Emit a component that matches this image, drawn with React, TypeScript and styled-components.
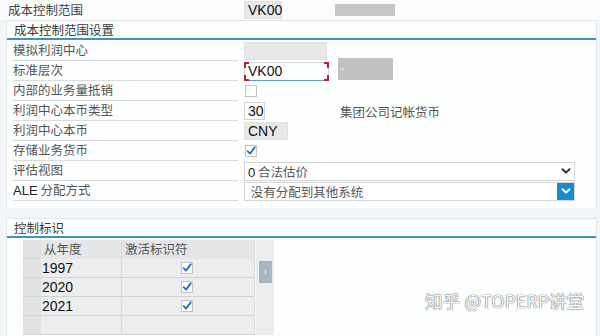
import React from "react";
import styled, { createGlobalStyle, css } from "styled-components";

const Global = createGlobalStyle`
  html, body { margin: 0; padding: 0; }
  body {
    background: #f3f6f8;
    font-family: "Noto Sans CJK SC", "Liberation Sans", sans-serif;
  }
`;

const Page = styled.div`
  position: relative;
  width: 600px;
  height: 336px;
  overflow: hidden;
  background: #f3f6f8;
`;

const TopRow = styled.div`
  display: flex;
  align-items: center;
  height: 20px;
  padding-left: 8px;
  background: #fbfcfd;
`;

const TopLabel = styled.div`
  width: 236px;
  font-size: 12.5px;
  color: #444;
  line-height: 20px;
`;

const Redacted = styled.div`
  width: 60px;
  height: 12px;
  margin-left: 53px;
  background: #c6c6c6;
`;

const Group = styled.div<{ $h: number; $mt: number }>`
  margin: ${(p) => p.$mt}px 3px 0 6px;
  height: ${(p) => p.$h}px;
  background: #fdfefe;
  border: 1px solid #e3e7ea;
  border-bottom: none;
  box-sizing: border-box;
`;

const GroupTitle = styled.div`
  height: 17px;
  line-height: 17px;
  padding-left: 7px;
  font-size: 12.5px;
  color: #3a3a3a;
  border-bottom: 2px solid #3c93c2;
`;

const Rows = styled.div`
  padding-top: 1px;
`;

const Row = styled.div`
  display: grid;
  grid-template-columns: 231px 1fr;
  column-gap: 6px;
  height: 20px;
  align-items: center;
`;

const Label = styled.div`
  margin-left: 6px;
  height: 19px;
  line-height: 18px;
  font-size: 12.5px;
  color: #555;
  border-bottom: 1px solid #d9dcde;
  white-space: nowrap;
`;

const Latin = styled.span`
  font-family: "Liberation Sans", sans-serif;
  font-size: 13px;
  color: #222;
`;

const Cell = styled.div`
  display: flex;
  align-items: center;
  height: 20px;
`;

const red = "#b0223a";

const Field = styled.div<{ $w: number; $grey?: boolean; $focus?: boolean }>`
  position: relative;
  box-sizing: border-box;
  width: ${(p) => p.$w}px;
  height: 18px;
  padding-left: 3px;
  line-height: 17px;
  font-family: "Liberation Sans", sans-serif;
  font-size: 14px;
  color: #111;
  background: ${(p) => (p.$grey ? "#e8e8e8" : "#fff")};
  border: 1px solid ${(p) => (p.$grey ? "#e0e0e0" : "#d2d2d2")};
  ${(p) =>
    p.$focus &&
    css`
      height: 19px;
      border-color: #cfd6dc;
      border-bottom: 1px solid #5aa0c8;
      &::before {
        content: "";
        position: absolute;
        inset: -1px;
        background:
          linear-gradient(${red}, ${red}) left top / 5px 2px no-repeat,
          linear-gradient(${red}, ${red}) left top / 2px 6px no-repeat,
          linear-gradient(${red}, ${red}) left bottom / 5px 2px no-repeat,
          linear-gradient(${red}, ${red}) left bottom / 2px 6px no-repeat,
          linear-gradient(${red}, ${red}) right top / 5px 2px no-repeat,
          linear-gradient(${red}, ${red}) right top / 2px 6px no-repeat,
          linear-gradient(${red}, ${red}) right bottom / 5px 2px no-repeat,
          linear-gradient(${red}, ${red}) right bottom / 2px 6px no-repeat;
      }
    `}
`;

const HelpBox = styled.div`
  width: 55px;
  height: 22px;
  margin-left: 9px;
  margin-top: -4px;
  background: #c2c2c2;
  color: #eee;
  font-size: 10px;
  line-height: 20px;
  padding-left: 3px;
  box-sizing: border-box;
`;

const Note = styled.div`
  margin-left: 75px;
  font-size: 12.5px;
  color: #555;
`;

const Box = styled.div`
  width: 12px;
  height: 12px;
  box-sizing: border-box;
  border: 1px solid #c4c4c4;
  background: #fff;
  display: flex;
  align-items: center;
  justify-content: center;
  margin-left: 1px;
`;

const Check = ({ on }: { on: boolean }) => (
  <Box>
    {on && (
      <svg width="12" height="12" viewBox="0 0 12 12">
        <path d="M2 6.2 L4.8 9.2 L10.5 1.6" fill="none" stroke="#1d6fd0" strokeWidth="2.2" strokeLinecap="round" strokeLinejoin="round" />
      </svg>
    )}
  </Box>
);

const Select = styled.div`
  display: flex;
  align-items: center;
  box-sizing: border-box;
  width: 331px;
  height: 19px;
  background: #fff;
  border: 1px solid #d4d4d4;
  padding-left: 3px;
  font-size: 12.5px;
  color: #555;
`;

const SelectText = styled.div`
  flex: 1;
  white-space: nowrap;
`;

const SelectBtn = styled.div<{ $blue?: boolean }>`
  width: 17px;
  height: 17px;
  display: flex;
  align-items: center;
  justify-content: center;
  background: ${(p) => (p.$blue ? "#1a8ad6" : "transparent")};
`;

const Chevron = ({ color }: { color: string }) => (
  <svg width="10" height="8" viewBox="0 0 10 8">
    <path d="M1.5 2.2 L5 5.6 L8.5 2.2" fill="none" stroke={color} strokeWidth="2" strokeLinecap="round" strokeLinejoin="round" />
  </svg>
);

const TableWrap = styled.div`
  padding: 2px 0 0 16px;
`;

const Table = styled.div`
  display: grid;
  grid-template-columns: 18px 81px 133px 19px;
  grid-auto-rows: 19px;
  width: 251px;
  background: #ebedef;
`;

const Gutter = styled.div`
  background: #dfe1e3;
  border-bottom: 1px solid #d4d7da;
`;

const HeadCell = styled.div`
  background: #e4e6e8;
  font-size: 12.5px;
  color: #555;
  line-height: 18px;
  padding-left: 3px;
  border-right: 1px solid #d8dadc;
`;

const TCell = styled.div<{ $center?: boolean }>`
  display: flex;
  align-items: center;
  justify-content: ${(p) => (p.$center ? "center" : "flex-start")};
  padding-left: ${(p) => (p.$center ? "0" : "1px")};
  padding-right: ${(p) => (p.$center ? "4px" : "0")};
  font-family: "Liberation Sans", sans-serif;
  font-size: 14px;
  color: #111;
  border-bottom: 1px solid #d0d3d6;
  border-right: 1px solid #d8dadc;
`;

const ScrollCol = styled.div`
  grid-column: 4;
  grid-row: 1 / span 5;
  background: #ecedee;
  position: relative;
  border-left: 1px solid #f6f6f6;
`;

const Thumb = styled.div`
  position: absolute;
  left: 3px;
  top: 21px;
  width: 13px;
  height: 22px;
  background: #a9b5c1;
  &::after {
    content: "";
    position: absolute;
    left: 6px;
    top: 9px;
    width: 1px;
    height: 4px;
    background: #e8edf2;
  }
`;

const Watermark = styled.div`
  position: absolute;
  left: 425px;
  top: 288px;
  font-size: 17.5px;
  font-family: "Noto Sans CJK SC", sans-serif;
  color: #fbfbfb;
  letter-spacing: 0.2px;
  text-shadow: 0 0 1px #777, 0 0 1px #777, 0 0 1px #888;
`;

const years = ["1997", "2020", "2021"];

export default function App() {
  return (
    <Page>
      <Global />
      <TopRow>
        <TopLabel>成本控制范围</TopLabel>
        <Field $w={38} $grey>VK00</Field>
        <Redacted />
      </TopRow>

      <Group $h={188} $mt={0}>
        <GroupTitle>成本控制范围设置</GroupTitle>
        <Rows>
          <Row>
            <Label>模拟利润中心</Label>
            <Cell><Field $w={83} $grey /></Cell>
          </Row>
          <Row>
            <Label>标准层次</Label>
            <Cell>
              <Field $w={85} $focus>VK00</Field>
              <HelpBox>‹</HelpBox>
            </Cell>
          </Row>
          <Row>
            <Label>内部的业务量抵销</Label>
            <Cell><Check on={false} /></Cell>
          </Row>
          <Row>
            <Label>利润中心本币类型</Label>
            <Cell>
              <Field $w={21}>30</Field>
              <Note>集团公司记帐货币</Note>
            </Cell>
          </Row>
          <Row>
            <Label>利润中心本币</Label>
            <Cell><Field $w={44} $grey>CNY</Field></Cell>
          </Row>
          <Row>
            <Label>存储业务货币</Label>
            <Cell><Check on /></Cell>
          </Row>
          <Row>
            <Label>评估视图</Label>
            <Cell>
              <Select>
                <SelectText><Latin>0</Latin> 合法估价</SelectText>
                <SelectBtn><Chevron color="#333" /></SelectBtn>
              </Select>
            </Cell>
          </Row>
          <Row>
            <Label><Latin>ALE</Latin> 分配方式</Label>
            <Cell>
              <Select>
                <SelectText>&nbsp;没有分配到其他系统</SelectText>
                <SelectBtn $blue><Chevron color="#fff" /></SelectBtn>
              </Select>
            </Cell>
          </Row>
        </Rows>
      </Group>

      <Group $h={130} $mt={10}>
        <GroupTitle>控制标识</GroupTitle>
        <TableWrap>
          <Table>
            <Gutter />
            <HeadCell>从年度</HeadCell>
            <HeadCell>激活标识符</HeadCell>
            <ScrollCol><Thumb /></ScrollCol>
            {years.map((y) => (
              <React.Fragment key={y}>
                <Gutter />
                <TCell>{y}</TCell>
                <TCell $center><Check on /></TCell>
              </React.Fragment>
            ))}
            <Gutter />
            <TCell />
            <TCell />
          </Table>
        </TableWrap>
      </Group>

      <Watermark>知乎 @TOPERP讲堂</Watermark>
    </Page>
  );
}
